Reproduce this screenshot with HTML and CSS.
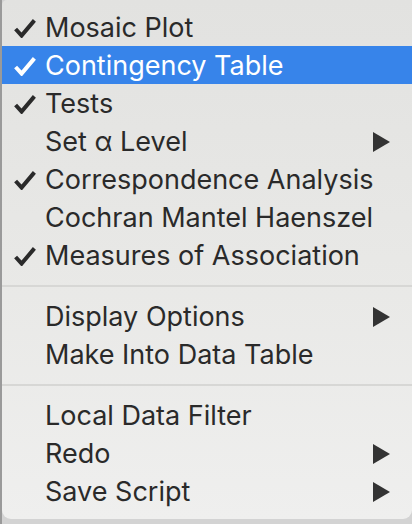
FILE: index.html
```html
<!DOCTYPE html>
<html lang="en">
<head>
    <meta charset="UTF-8">
    <meta name="viewport" content="width=device-width, initial-scale=1.0">
    <title>Contingency Menu</title>
    <link rel="stylesheet" href="styles.css">
</head>
<body>
    <div class="menu">
        <div class="menu-item checked">
            <span class="check"><svg viewBox="0 0 22 19"><path d="M1.6 10 L7.6 16.6 L20.4 1.4"/></svg></span>
            <span class="label">Mosaic Plot</span>
        </div>
        <div class="menu-item checked active">
            <span class="check"><svg viewBox="0 0 22 19"><path d="M1.6 10 L7.6 16.6 L20.4 1.4"/></svg></span>
            <span class="label">Contingency Table</span>
        </div>
        <div class="menu-item checked">
            <span class="check"><svg viewBox="0 0 22 19"><path d="M1.6 10 L7.6 16.6 L20.4 1.4"/></svg></span>
            <span class="label">Tests</span>
        </div>
        <div class="menu-item">
            <span class="check"></span>
            <span class="label">Set α Level</span>
            <span class="submenu-arrow"></span>
        </div>
        <div class="menu-item checked">
            <span class="check"><svg viewBox="0 0 22 19"><path d="M1.6 10 L7.6 16.6 L20.4 1.4"/></svg></span>
            <span class="label">Correspondence Analysis</span>
        </div>
        <div class="menu-item">
            <span class="check"></span>
            <span class="label">Cochran Mantel Haenszel</span>
        </div>
        <div class="menu-item checked">
            <span class="check"><svg viewBox="0 0 22 19"><path d="M1.6 10 L7.6 16.6 L20.4 1.4"/></svg></span>
            <span class="label">Measures of Association</span>
        </div>

        <div class="separator"></div>

        <div class="menu-item">
            <span class="check"></span>
            <span class="label">Display Options</span>
            <span class="submenu-arrow"></span>
        </div>
        <div class="menu-item">
            <span class="check"></span>
            <span class="label">Make Into Data Table</span>
        </div>

        <div class="separator"></div>

        <div class="menu-item">
            <span class="check"></span>
            <span class="label">Local Data Filter</span>
        </div>
        <div class="menu-item">
            <span class="check"></span>
            <span class="label">Redo</span>
            <span class="submenu-arrow"></span>
        </div>
        <div class="menu-item">
            <span class="check"></span>
            <span class="label">Save Script</span>
            <span class="submenu-arrow"></span>
        </div>
    </div>
</body>
</html>
```

FILE: styles.css
```css
* {
    margin: 0;
    padding: 0;
    box-sizing: border-box;
}

body {
    font-family: 'Inter', 'Liberation Sans', sans-serif;
    background: linear-gradient(to right, #9a9a9a 0, #9a9a9a 2px, #d3d3d3 2px);
    width: 412px;
    height: 524px;
    overflow: hidden;
    color: #2a2a2a;
}

.menu {
    margin-left: 2px;
    width: 410px;
    padding: 8px 0 9px;
    background: linear-gradient(to bottom, #e2e2e0, #e8e8e6 50%, #efefee);
    border-radius: 5px 0 9px 9px;
}

.menu-item {
    display: flex;
    align-items: center;
    height: 38px;
    padding: 2px 22px 0 12px;
    font-size: 27px;
    line-height: 36px;
}

.menu-item.active {
    background-color: #3784ea;
    color: #ffffff;
}

.check {
    width: 31px;
    flex-shrink: 0;
    display: flex;
    align-items: center;
}

.check svg {
    width: 22px;
    height: 19px;
    fill: none;
    stroke: #2a2a2a;
    stroke-width: 4;
    stroke-linejoin: miter;
}

.active .check svg {
    stroke: #ffffff;
}

.label {
    flex: 1;
    white-space: nowrap;
}

.submenu-arrow {
    width: 0;
    height: 0;
    border-top: 10px solid transparent;
    border-bottom: 10px solid transparent;
    border-left: 17px solid #333333;
}

.separator {
    height: 23px;
    padding-top: 11px;
}

.separator::before {
    content: '';
    display: block;
    height: 2px;
    background-color: #d7d7d5;
}
```
